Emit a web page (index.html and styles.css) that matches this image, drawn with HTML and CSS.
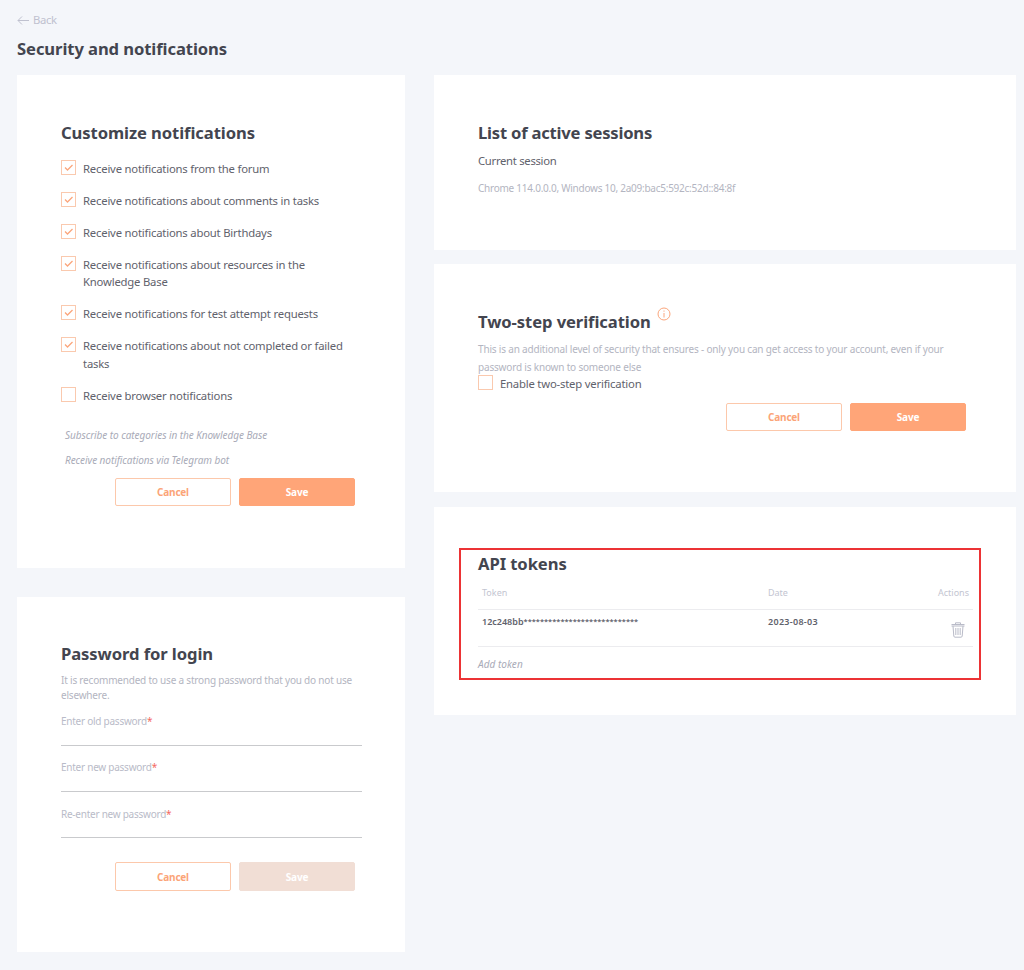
FILE: index.html
```html
<!DOCTYPE html>
<html lang="en">

<head>
    <meta charset="UTF-8">
    <meta name="viewport" content="width=device-width, initial-scale=1.0">
    <title>Security and notifications</title>
    <link rel="stylesheet" href="styles.css">
</head>

<body>
    <a class="back" href="#">
        <svg class="back-icon" width="13" height="10" viewBox="0 0 13 10" fill="none" stroke="currentColor">
            <path d="M12 5.500H1M5 1.500L1 5.500l4 4" />
        </svg>
        <span>Back</span>
    </a>
    <h1>Security and notifications</h1>

    <div class="columns">
        <div class="column-left">
            <form class="card card-notifications">
                <h2>Customize notifications</h2>
                <ul class="options">
                    <li><input type="checkbox" id="forum" checked><label for="forum">Receive notifications from the forum</label></li>
                    <li><input type="checkbox" id="comments" checked><label for="comments">Receive notifications about comments in tasks</label></li>
                    <li><input type="checkbox" id="birthdays" checked><label for="birthdays">Receive notifications about Birthdays</label></li>
                    <li><input type="checkbox" id="resources" checked><label for="resources">Receive notifications about resources in the Knowledge Base</label></li>
                    <li><input type="checkbox" id="attempts" checked><label for="attempts">Receive notifications for test attempt requests</label></li>
                    <li><input type="checkbox" id="failed" checked><label for="failed">Receive notifications about not completed or failed tasks</label></li>
                    <li><input type="checkbox" id="browser"><label for="browser">Receive browser notifications</label></li>
                </ul>
                <div class="links">
                    <a href="#">Subscribe to categories in the Knowledge Base</a>
                    <a href="#">Receive notifications via Telegram bot</a>
                </div>
                <div class="buttons">
                    <button type="button" class="button button-cancel">Cancel</button>
                    <button type="button" class="button button-save">Save</button>
                </div>
            </form>

            <form class="card card-password">
                <h2>Password for login</h2>
                <p class="hint">It is recommended to use a strong password that you do not use elsewhere.</p>
                <div class="field">
                    <label for="oldPassword">Enter old password<span class="required">*</span></label>
                    <input type="password" id="oldPassword">
                </div>
                <div class="field">
                    <label for="newPassword">Enter new password<span class="required">*</span></label>
                    <input type="password" id="newPassword">
                </div>
                <div class="field">
                    <label for="repeatPassword">Re-enter new password<span class="required">*</span></label>
                    <input type="password" id="repeatPassword">
                </div>
                <div class="buttons">
                    <button type="button" class="button button-cancel">Cancel</button>
                    <button type="button" class="button button-save" disabled>Save</button>
                </div>
            </form>
        </div>

        <div class="column-right">
            <div class="card card-sessions">
                <h2>List of active sessions</h2>
                <p class="session-title">Current session</p>
                <p class="session">Chrome 114.0.0.0, Windows 10, 2a09:bac5:592c:52d::84:8f</p>
            </div>

            <form class="card card-verification">
                <h2>Two-step verification
                    <svg class="info-icon" width="14" height="14" viewBox="0 0 14 14" fill="none" stroke="currentColor">
                        <circle cx="7" cy="7" r="6" />
                        <path d="M7 6v4.500M7 3.500v1.200" />
                    </svg>
                </h2>
                <p class="description">This is an additional level of security that ensures - only you can get access to your account, even if your password is known to someone else</p>
                <div class="two-step"><input type="checkbox" id="twoStep"><label for="twoStep">Enable two-step verification</label></div>
                <div class="buttons">
                    <button type="button" class="button button-cancel">Cancel</button>
                    <button type="button" class="button button-save">Save</button>
                </div>
            </form>

            <div class="card card-tokens">
                <div class="tokens">
                    <h2>API tokens</h2>
                    <table>
                        <thead>
                            <tr>
                                <th class="token">Token</th>
                                <th>Date</th>
                                <th class="actions">Actions</th>
                            </tr>
                        </thead>
                        <tbody>
                            <tr>
                                <td>12c248bb<span class="mask">****************************</span></td>
                                <td class="date">2023-08-03</td>
                                <td class="actions">
                                    <svg class="trash-icon" width="14" height="16" viewBox="0 0 14 16" fill="none" stroke="currentColor">
                                        <path d="M.5 2.500h13M.5 4h13M4.500 2.500V.8h5v1.700M2 4l.8 10q.1 1.200 1.200 1.200h6q1.100 0 1.200-1.200L12 4M4.800 6v7M7 6v7M9.200 6v7" />
                                    </svg>
                                </td>
                            </tr>
                        </tbody>
                    </table>
                    <a class="add-token" href="#">Add token</a>
                </div>
            </div>
        </div>
    </div>
</body>

</html>
```
FILE: styles.css
```css
* {
    box-sizing: border-box;
}

body {
    background-color: #f4f6fa;
    font-family: "Noto Sans", "Open Sans", sans-serif;
    font-size: 11.3px;
    line-height: 17.5px;
    letter-spacing: -0.2px;
    color: #5f626c;
    margin: 0;
    padding: 11px 8px 18px 17px;
}

h1,
h2 {
    margin: 0;
    font-size: 16.6px;
    line-height: 24px;
    font-weight: 700;
    letter-spacing: -0.08px;
    color: #43454f;
}

h1 {
    margin: 8px 0 14px;
}

p {
    margin: 0;
}

a {
    color: #a9abb8;
    text-decoration: none;
}

.back {
    display: flex;
    align-items: center;
    gap: 3px;
    height: 18px;
    letter-spacing: -0.4px;
    color: #bfc1cf;
}

.columns {
    display: grid;
    grid-template-columns: 388px 582px;
    gap: 29px;
}

.column-left {
    display: flex;
    flex-direction: column;
    gap: 29px;
}

.column-right {
    display: flex;
    flex-direction: column;
    gap: 14.5px;
}

.card {
    background-color: #fff;
    padding: 46px 43px 0 44px;
}

.card-notifications {
    height: 493px;
}

.card-password {
    height: 355px;
    padding-top: 45px;
}

.card-sessions {
    height: 174.5px;
}

.card-verification {
    height: 228px;
}

.card-tokens {
    height: 208.5px;
    padding: 41px 35px 0 25px;
}

input[type="checkbox"] {
    appearance: none;
    flex: none;
    width: 15px;
    height: 15px;
    margin: 0;
    border: 1px solid #fac9ae;
}

input[type="checkbox"]:checked {
    background: url("data:image/svg+xml,%3Csvg xmlns='http://www.w3.org/2000/svg' width='13' height='13'%3E%3Cpath d='M3 6.500l2.500 2.500L10.500 4' fill='none' stroke='%23fba67c' stroke-width='1.300'/%3E%3C/svg%3E") center no-repeat;
}

.options {
    list-style: none;
    margin: 14.5px 0 0;
    padding: 0;
}

.options li,
.two-step {
    display: flex;
    gap: 7px;
    margin-bottom: 14.5px;
}

.options label {
    padding-top: 0.4px;
    margin-bottom: -0.4px;
    line-height: 17.5px;
}

.links {
    display: flex;
    flex-direction: column;
    gap: 10px;
    margin: 24px 0 9.5px 4px;
    font-size: 10px;
    line-height: 15px;
    letter-spacing: -0.06px;
    font-style: italic;
}

.buttons {
    display: flex;
    justify-content: flex-end;
    gap: 8px;
    padding-right: 7px;
}

.button {
    width: 116px;
    height: 28.5px;
    padding: 0;
    border: 1px solid #ffa578;
    border-radius: 2px;
    font-family: inherit;
    font-size: 10px;
    font-weight: 700;
    letter-spacing: -0.2px;
    cursor: pointer;
}

.button-cancel {
    background-color: #fff;
    border-color: #fcc8ab;
    color: #fba478;
}

.button-save {
    background-color: #ffa578;
    color: #fff;
}

.button-save:disabled {
    background-color: #f1ded5;
    border-color: #f1ded5;
}

.hint {
    margin: 7px 0 11px;
    font-size: 10px;
    line-height: 15px;
    color: #b3b5c1;
}

.field {
    height: 46.3px;
    font-size: 10px;
    line-height: 15px;
    letter-spacing: -0.25px;
    color: #b9bbc8;
}

.field label {
    display: block;
}

.field input {
    display: block;
    width: 100%;
    height: 16.5px;
    padding: 0;
    border: 0;
    border-bottom: 1px solid #c9cacd;
    outline: none;
}

.card-password .buttons {
    margin-top: 9.4px;
}

.required {
    color: #f4695f;
}

.card-sessions h2 {
    letter-spacing: -0.21px;
}

.session-title {
    margin: 6.5px 0 10.5px;
    letter-spacing: -0.3px;
}

.session {
    font-size: 10px;
    letter-spacing: -0.25px;
    color: #b3b5c1;
}

.card-verification h2 {
    display: flex;
    gap: 6px;
}

.info-icon {
    margin-top: -3px;
    color: #fba67c;
}

.description {
    margin-top: 7px;
    font-size: 10px;
    letter-spacing: -0.18px;
    color: #b3b5c1;
}

.two-step {
    margin: -1px 0 10px;
}

.tokens {
    height: 132px;
    padding: 2px 6px 0 17px;
    border: 2px solid #ec3335;
}

table {
    width: 100%;
    border-collapse: collapse;
    font-size: 9px;
    letter-spacing: 0;
}

th,
td {
    padding: 0 4px;
    border-bottom: 1px solid #ececef;
    text-align: left;
    vertical-align: top;
}

th {
    height: 34px;
    padding-top: 8px;
    color: #c3c5d1;
    font-weight: 400;
}

td {
    height: 37px;
    padding-top: 3px;
    font-weight: 600;
}

.token {
    width: 286px;
}

.date {
    letter-spacing: 0.3px;
}

.mask {
    font-size: 7.5px;
    vertical-align: 1px;
}

.actions {
    text-align: right;
}

.trash-icon {
    margin: 9px 4px 0 0;
    color: #b9bbc8;
}

.add-token {
    display: block;
    margin-top: 9px;
    font-size: 10px;
    letter-spacing: 0.05px;
    font-style: italic;
}
```
